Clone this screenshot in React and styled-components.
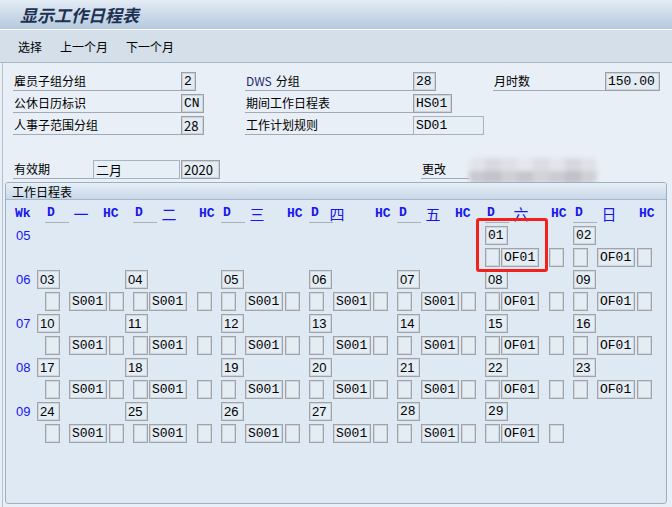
import React from "react";
import styled, { createGlobalStyle } from "styled-components";

const GlobalStyle = createGlobalStyle`
  html, body {
    margin: 0;
    padding: 0;
    background: #e9eff6;
  }
  body {
    width: 672px;
    height: 507px;
    overflow: hidden;
    font-family: "Noto Sans CJK SC", "Liberation Sans", sans-serif;
    color: #000;
  }
`;

const MONO = `"Liberation Mono", "DejaVu Sans Mono", monospace`;
const BLUE = "#1616ee";

const TitleBar = styled.div`
  height: 29px;
  display: flex;
  align-items: center;
  padding-left: 20px;
  background: linear-gradient(#e4ecf5, #b5c9de);
  border-bottom: 1px solid #ffffff;
`;

const Title = styled.h1`
  margin: 0;
  font-size: 17px;
  font-weight: bold;
  font-style: italic;
  color: #1d3152;
`;

const Toolbar = styled.div`
  height: 32px;
  display: flex;
  align-items: center;
  gap: 18px;
  padding-left: 18px;
  background: #d4dfea;
  border-bottom: 1px solid #a9b7c5;
  font-size: 12px;
`;

const ToolItem = styled.span`
  cursor: default;
`;

const Body = styled.div`
  margin-left: 2px;
  padding: 7px 0 0 2px;
  border-left: 1px solid #b6c1cc;
  height: 437px;
`;

const Form = styled.div`
  display: grid;
  grid-template-columns: repeat(83, 8px);
  grid-auto-rows: 22px;
`;

const Label = styled.div`
  grid-row: ${(p) => p.$r + 1};
  grid-column: ${(p) => p.$c + 1} / span ${(p) => p.$w};
  display: flex;
  align-items: flex-end;
  padding: 0 0 1px 1px;
  margin-bottom: 1px;
  border-bottom: 1px solid #a2abb5;
  font-size: 12px;
  line-height: 16px;
  white-space: nowrap;
`;

const Abbr = styled.span`
  color: #1b2b6e;
  margin-right: 4px;
`;

const Field = styled.div`
  grid-row: ${(p) => p.$r + 1};
  grid-column: ${(p) => p.$c + 1} / span ${(p) => p.$w};
  margin: 2px 1px 1px 0;
  box-sizing: border-box;
  height: 19px;
  padding: 0 2px;
  border: 1px solid ${(p) => (p.$input ? "#a7b3c0" : "#9aa0a6")};
  box-shadow: ${(p) => (p.$input ? "none" : "inset 0 0 0 1px #cdd3d9")};
  background: ${(p) => (p.$input ? "#e6eef6" : "#e3ebf3")};
  font-family: ${(p) => (p.$sans ? `"Noto Sans CJK SC", "Liberation Sans", sans-serif` : MONO)};
  font-size: 13px;
  line-height: 17px;
  white-space: nowrap;
  overflow: hidden;
`;

const Blurred = styled.div`
  grid-row: 5;
  grid-column: 59 / span 16;
  align-self: end;
  height: 26px;
  margin-bottom: -4px;
  display: grid;
  grid-template-columns: repeat(8, 1fr);
  grid-template-rows: 1fr 1fr;
  filter: blur(2px);
  border-radius: 6px;
  overflow: hidden;
`;

const Pixel = styled.div`
  background: ${(p) => p.$tone};
`;

const Group = styled.div`
  position: relative;
  margin-top: 2px;
  width: 662px;
  height: 322px;
  box-sizing: border-box;
  border: 1px solid #9cb1c8;
  border-radius: 3px;
  background: #dfe9f4;
  overflow: hidden;
`;

const GroupHeader = styled.div`
  height: 16px;
  display: flex;
  align-items: center;
  padding-left: 6px;
  border-bottom: 1px solid #a4b8cd;
  background: linear-gradient(#e6eef6, #c9d8e8);
  font-size: 12px;
`;

const CalGrid = styled.div`
  display: grid;
  grid-template-columns: 7px repeat(81, 8px);
  grid-auto-rows: 22px;
  padding-top: 2px;
`;

const HeadCell = styled.div`
  grid-row: 1;
  grid-column: ${(p) => p.$c + 1} / span ${(p) => p.$w};
  display: flex;
  align-items: center;
  justify-content: ${(p) => (p.$center ? "center" : "flex-start")};
  padding-left: ${(p) => (p.$center ? 0 : 2)}px;
  margin-bottom: ${(p) => (p.$under ? 1 : 0)}px;
  border-bottom: ${(p) => (p.$under ? "1px solid #a8b2bc" : "none")};
  color: ${BLUE};
  font-family: ${(p) => (p.$day ? `"Noto Sans CJK SC", sans-serif` : MONO)};
  font-size: ${(p) => (p.$day ? 15 : 13)}px;
  font-weight: ${(p) => (p.$day ? "normal" : "bold")};
  white-space: nowrap;
`;

const WeekNo = styled.div`
  grid-row: ${(p) => p.$r + 1};
  grid-column: 2 / span 2;
  display: flex;
  align-items: center;
  padding-left: 3px;
  color: ${BLUE};
  font-family: "Liberation Sans", sans-serif;
  font-size: 13px;
`;

const Box = styled.div`
  grid-row: ${(p) => p.$r + 1};
  grid-column: ${(p) => p.$c + 1} / span ${(p) => p.$w};
  margin: 2px ${(p) => (p.$w > 3 ? 2 : 1)}px 1px 0;
  box-sizing: border-box;
  height: 19px;
  padding: 0 2px;
  border: 1px solid #9ea4aa;
  box-shadow: inset 0 0 0 1px #d0d6dc;
  background: #e4ecf4;
  font-family: ${(p) => (p.$sans ? `"Liberation Sans", sans-serif` : MONO)};
  font-size: 13px;
  line-height: 17px;
  white-space: nowrap;
`;

const Highlight = styled.div`
  position: absolute;
  left: 470px;
  top: 35px;
  width: 72px;
  height: 54px;
  box-sizing: border-box;
  border: 3px solid #f2211c;
  border-radius: 3px;
  pointer-events: none;
`;

const formRows = [
  { r: 0, label: "雇员子组分组", value: "2", w: 2 },
  { r: 1, label: "公休日历标识", value: "CN", w: 3 },
  { r: 2, label: "人事子范围分组", value: "28", w: 3, sans: true },
];

const rightRows = [
  { r: 0, label: <><Abbr>DWS</Abbr>分组</>, value: "28", w: 3 },
  { r: 1, label: "期间工作日程表", value: "HS01", w: 5 },
  { r: 2, label: "工作计划规则", value: "SD01", w: 9, input: true },
];

const blurTones = [
  "#e2e3e8", "#d9dae0", "#dfe0e6", "#e6e7ec", "#dcdde3", "#e4e5ea", "#d7d8de", "#e0e1e6",
  "#c9cad1", "#c3c4cb", "#cfd0d6", "#c6c7ce", "#d2d3d9", "#cbccd3", "#c1c2c9", "#d0d1d7",
];

const dayNames = ["一", "二", "三", "四", "五", "六", "日"];
const dCols = [5, 16, 27, 38, 49, 60, 71];
const nameCols = [8, 19, 30, 40, 52, 63, 74];
const hcCols = [12, 24, 35, 46, 56, 68, 79];

const dateCols = [4, 15, 27, 38, 49, 60, 71];
const chkCols = [5, 16, 27, 38, 49, 60, 71];
const shiftCols = [8, 18, 30, 41, 52, 62, 74];
const hcChkCols = [13, 24, 35, 46, 57, 68, 79];

const shiftFor = (i) => (i >= 5 ? "OF01" : "S001");

const weeks = [
  { no: "05", days: [null, null, null, null, null, "01", "02"] },
  { no: "06", days: ["03", "04", "05", "06", "07", "08", "09"] },
  { no: "07", days: ["10", "11", "12", "13", "14", "15", "16"] },
  { no: "08", days: ["17", "18", "19", "20", "21", "22", "23"] },
  { no: "09", days: ["24", "25", "26", "27", "28", "29", null] },
];

const monoDates = ["01", "02", "28", "29"];

const Week = ({ week, index }) => {
  const r = 1 + index * 2;
  return (
    <>
      <WeekNo $r={r}>{week.no}</WeekNo>
      {week.days.map((d, i) =>
        d ? (
          <React.Fragment key={d}>
            <Box $r={r} $c={dateCols[i]} $w={3} $sans={!monoDates.includes(d)}>
              {d}
            </Box>
            <Box $r={r + 1} $c={chkCols[i]} $w={2} />
            <Box $r={r + 1} $c={shiftCols[i]} $w={5}>
              {shiftFor(i)}
            </Box>
            <Box $r={r + 1} $c={hcChkCols[i]} $w={2} />
          </React.Fragment>
        ) : null
      )}
    </>
  );
};

export default function App() {
  return (
    <>
      <GlobalStyle />
      <TitleBar>
        <Title>显示工作日程表</Title>
      </TitleBar>
      <Toolbar>
        <ToolItem>选择</ToolItem>
        <ToolItem>上一个月</ToolItem>
        <ToolItem>下一个月</ToolItem>
      </Toolbar>
      <Body>
        <Form>
          {formRows.map((row) => (
            <React.Fragment key={row.label}>
              <Label $r={row.r} $c={1} $w={21}>{row.label}</Label>
              <Field $r={row.r} $c={22} $w={row.w} $sans={row.sans}>
                {row.value}
              </Field>
            </React.Fragment>
          ))}
          {rightRows.map((row) => (
            <React.Fragment key={row.value + row.r}>
              <Label $r={row.r} $c={30} $w={21}>{row.label}</Label>
              <Field $r={row.r} $c={51} $w={row.w} $input={row.input}>
                {row.value}
              </Field>
            </React.Fragment>
          ))}
          <Label $r={0} $c={61} $w={14}>月时数</Label>
          <Field $r={0} $c={75} $w={7}>150.00</Field>

          <Label $r={4} $c={1} $w={10}>有效期</Label>
          <Field $r={4} $c={11} $w={11} $input $sans>二月</Field>
          <Field $r={4} $c={22} $w={5} $sans>2020</Field>
          <Label $r={4} $c={52} $w={6}>更改</Label>
          <Blurred>
            {blurTones.map((t, i) => (
              <Pixel key={i} $tone={t} />
            ))}
          </Blurred>
        </Form>

        <Group>
          <GroupHeader>工作日程表</GroupHeader>
          <CalGrid>
            <HeadCell $c={1} $w={2}>Wk</HeadCell>
            {dayNames.map((name, i) => (
              <React.Fragment key={name}>
                <HeadCell $c={dCols[i]} $w={3} $under>D</HeadCell>
                <HeadCell $c={nameCols[i]} $w={3} $center $day>{name}</HeadCell>
                <HeadCell $c={hcCols[i]} $w={2}>HC</HeadCell>
              </React.Fragment>
            ))}
            {weeks.map((w, i) => (
              <Week key={w.no} week={w} index={i} />
            ))}
          </CalGrid>
          <Highlight />
        </Group>
      </Body>
    </>
  );
}
